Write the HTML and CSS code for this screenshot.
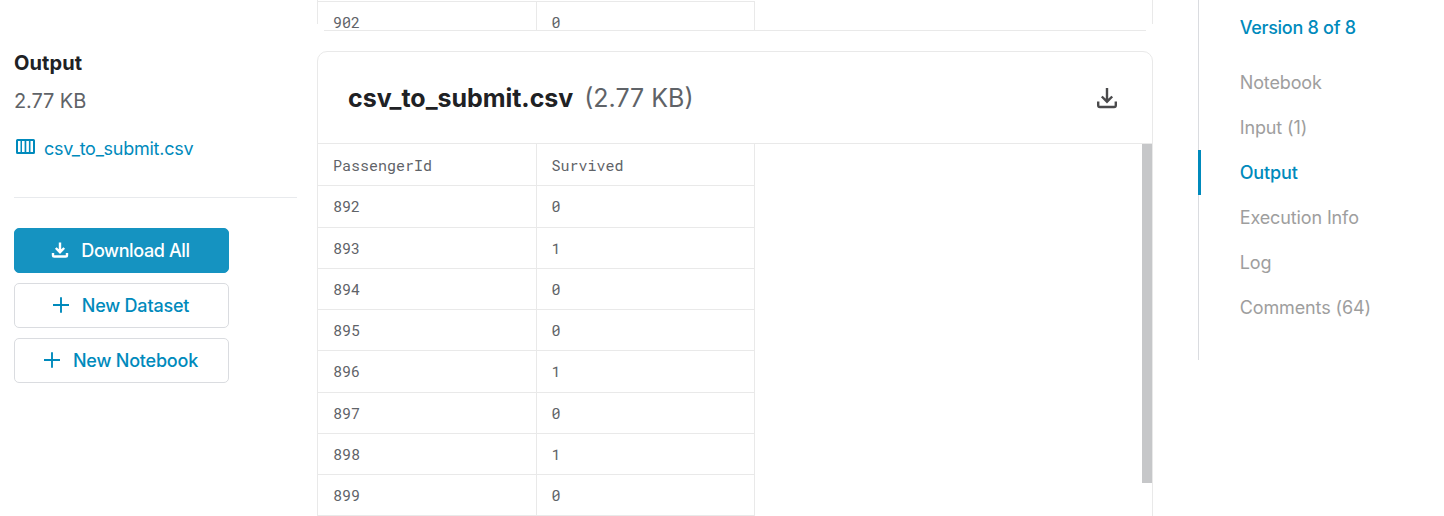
FILE: index.html
```html
<!DOCTYPE html>
<html lang="en">
<head>
    <meta charset="UTF-8">
    <meta name="viewport" content="width=device-width, initial-scale=1.0">
    <title>Notebook Output</title>
    <link rel="stylesheet" href="styles.css">
</head>
<body>
    <div class="page">
        <aside class="sidebar">
            <h2>Output</h2>
            <p class="size">2.77 KB</p>
            <a class="file">
                <svg width="20" height="20" viewBox="0 0 20 20"><path d="M1.500 0h16A1.500 1.500 0 0 1 19 1.500v12a1.500 1.500 0 0 1-1.500 1.500h-16A1.500 1.500 0 0 1 0 13.500v-12A1.500 1.500 0 0 1 1.500 0zM2 2v11h2.500V2zM6 2v11h2.600V2zM10.300 2v11h2.600V2zM14.500 2v11H17V2z" fill="#008abc" fill-rule="evenodd"/></svg>
                <span>csv_to_submit.csv</span>
            </a>
            <hr>
            <div class="buttons">
                <button class="btn primary">
                    <svg width="18" height="18" viewBox="0 0 18 18" fill="none" stroke="currentColor" stroke-width="2.400"><path d="M9 .5v9.500M4.800 6L9 10.200 13.200 6M2 11v2.200q0 1.300 1.300 1.300h11.400q1.300 0 1.300-1.300V11"/></svg>
                    <span>Download All</span>
                </button>
                <button class="btn">
                    <svg width="18" height="18" viewBox="0 0 18 18" fill="none" stroke="currentColor" stroke-width="1.900"><path d="M9 .3v15.500M1 8h16"/></svg>
                    <span>New Dataset</span>
                </button>
                <button class="btn">
                    <svg width="18" height="18" viewBox="0 0 18 18" fill="none" stroke="currentColor" stroke-width="1.900"><path d="M9 .3v15.500M1 8h16"/></svg>
                    <span>New Notebook</span>
                </button>
            </div>
        </aside>

        <main class="content">
            <section class="previous">
                <div class="table">
                    <div class="row"><span>902</span><span>0</span></div>
                </div>
                <i class="corner left"></i>
                <i class="corner right"></i>
            </section>
            <section class="card">
                <header class="card-header">
                    <h1>csv_to_submit.csv</h1>
                    <span class="card-size">(2.77 KB)</span>
                    <svg class="download" width="22" height="22" viewBox="0 0 22 22" fill="none" stroke="#4a4a4c" stroke-width="2.400"><path d="M11 1v14M5.800 9.500l5.200 5.200 5.200-5.200M2.200 14.500v3.800q0 1.700 1.700 1.700h14.200q1.700 0 1.700-1.700v-3.800"/></svg>
                </header>
                <div class="card-body">
                    <div class="table">
                        <div class="row head"><span>PassengerId</span><span>Survived</span></div>
                        <div class="row"><span>892</span><span>0</span></div>
                        <div class="row"><span>893</span><span>1</span></div>
                        <div class="row"><span>894</span><span>0</span></div>
                        <div class="row"><span>895</span><span>0</span></div>
                        <div class="row"><span>896</span><span>1</span></div>
                        <div class="row"><span>897</span><span>0</span></div>
                        <div class="row"><span>898</span><span>1</span></div>
                        <div class="row"><span>899</span><span>0</span></div>
                    </div>
                    <div class="scrollbar"></div>
                </div>
            </section>
        </main>

        <nav class="toc">
            <a class="version">Version 8 of 8</a>
            <a>Notebook</a>
            <a>Input (1)</a>
            <a class="active">Output</a>
            <a>Execution Info</a>
            <a>Log</a>
            <a>Comments (64)</a>
        </nav>
    </div>
</body>
</html>
```
FILE: styles.css
```css
* {
    box-sizing: border-box;
}
body {
    margin: 0;
    background-color: #fff;
    font-family: Inter, sans-serif;
    color: #202124;
}
.page {
    display: flex;
    height: 516px;
    overflow: hidden;
}
.sidebar {
    width: 317px;
    padding: 48px 20px 0 14px;
}
h1, h2, p {
    margin: 0;
}
h2 {
    font-size: 20px;
    line-height: 30px;
    font-weight: 700;
    letter-spacing: 0.1px;
}
.size {
    margin-top: 8px;
    font-size: 20px;
    line-height: 30px;
    letter-spacing: -0.1px;
    color: #5f6368;
}
.file {
    display: flex;
    align-items: center;
    gap: 8px;
    margin-top: 18px;
    padding-left: 2px;
    font-size: 18px;
    line-height: 30px;
    letter-spacing: -0.26px;
    color: #008abc;
}
hr {
    margin: 33px 0 30px;
    border: none;
    border-top: 1px solid #e8eaed;
}
.buttons {
    display: flex;
    flex-direction: column;
    gap: 10px;
}
.btn {
    display: flex;
    align-items: center;
    justify-content: center;
    gap: 12px;
    width: 215px;
    height: 45px;
    padding: 0 2px 0 0;
    border: 1px solid #dadce0;
    border-radius: 5px;
    background-color: #fff;
    color: #008abc;
    font-family: inherit;
    font-size: 18px;
    font-weight: 500;
    letter-spacing: -0.2px;
}
.btn.primary {
    border-color: #1593c1;
    background-color: #1593c1;
    color: #fff;
    letter-spacing: -0.37px;
}
.content {
    width: 836px;
}
.previous {
    position: relative;
    height: 31px;
    border: 1px solid #e9e9e9;
    border-top: none;
    padding-top: 1px;
}
.previous .row {
    height: 29px;
    border-top: 1px solid #e9e9e9;
    border-bottom: none;
    overflow: hidden;
}
.previous .row span {
    height: 39px;
}
/* clipped bottom corners of the scrolled table */
.corner {
    position: absolute;
    bottom: -1px;
    width: 7px;
    height: 7px;
    background-color: #fff;
}
.corner.left {
    left: -1px;
}
.corner.right {
    right: -1px;
}
.card {
    margin-top: 20px;
    height: 480px;
    border: 1px solid #e9e9e9;
    border-radius: 10px;
}
.card-header {
    display: flex;
    align-items: center;
    height: 92px;
    padding: 0 34px 0 30px;
    border-bottom: 1px solid #e9e9e9;
}
h1 {
    font-size: 25px;
    font-weight: 700;
    letter-spacing: -0.04px;
}
.card-size {
    margin-left: 11px;
    font-size: 25px;
    color: #5f6368;
}
.download {
    margin-left: auto;
}
.card-body {
    display: flex;
    justify-content: space-between;
}
.table {
    width: 437px;
    font-family: "Roboto Mono", "DejaVu Sans Mono", monospace;
    font-size: 15px;
    color: #5f6368;
}
.row {
    display: grid;
    grid-template-columns: 219px 218px;
    height: 41.25px;
    border-bottom: 1px solid #e9e9e9;
}
.row.head {
    height: 42.35px;
}
.row span {
    display: flex;
    align-items: center;
    padding-left: 15px;
    border-right: 1px solid #e9e9e9;
}
.row span + span {
    padding-left: 14.5px;
}
.scrollbar {
    width: 10px;
    height: 339px;
    background-color: #c6c7c9;
}
.toc {
    display: flex;
    flex-direction: column;
    width: 246px;
    height: 360px;
    margin-left: 45px;
    padding-top: 5px;
    border-left: 1px solid #dadce0;
    font-size: 18px;
    line-height: 45px;
    letter-spacing: -0.12px;
    color: #9e9e9e;
}
.toc a {
    padding-left: 40.7px;
}
.toc .version {
    margin-bottom: 10px;
    font-weight: 500;
    letter-spacing: -0.28px;
    color: #008abc;
}
.toc .active {
    margin-left: -1px;
    padding-left: 38.7px;
    border-left: 3px solid #008abc;
    font-weight: 500;
    color: #008abc;
}
```
